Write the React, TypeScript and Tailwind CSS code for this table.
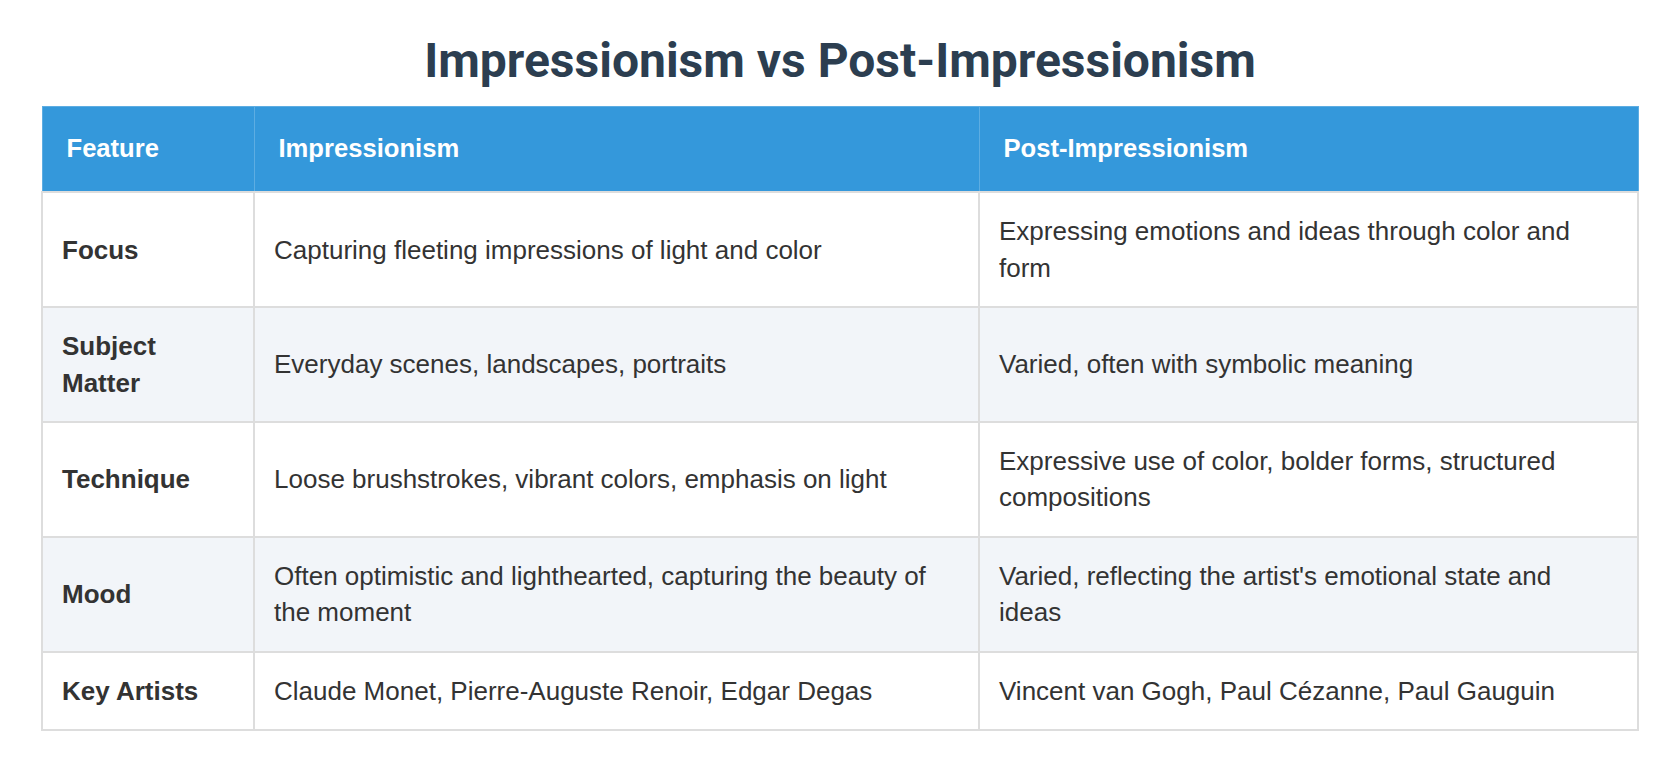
const rows = [
  {
    feature: "Focus",
    imp: "Capturing fleeting impressions of light and color",
    post: "Expressing emotions and ideas through color and form",
  },
  {
    feature: "Subject Matter",
    imp: "Everyday scenes, landscapes, portraits",
    post: "Varied, often with symbolic meaning",
  },
  {
    feature: "Technique",
    imp: "Loose brushstrokes, vibrant colors, emphasis on light",
    post: "Expressive use of color, bolder forms, structured compositions",
  },
  {
    feature: "Mood",
    imp: "Often optimistic and lighthearted, capturing the beauty of the moment",
    post: "Varied, reflecting the artist's emotional state and ideas",
  },
  {
    feature: "Key Artists",
    imp: "Claude Monet, Pierre-Auguste Renoir, Edgar Degas",
    post: "Vincent van Gogh, Paul Cézanne, Paul Gauguin",
  },
];

export default function App() {
  return (
    <div className="min-h-screen bg-white px-[41px] pt-[32px] pb-[40px]">
      <h1 className="mb-[16px] text-center font-['Roboto',sans-serif] text-[48px] font-bold leading-[1.2] text-[#2c3e50]">
        Impressionism vs Post-Impressionism
      </h1>

      <table className="w-full table-fixed border-collapse font-['Liberation_Sans',Arial,sans-serif] text-[26px] leading-[1.4]">
        <colgroup>
          <col className="w-[212px]" />
          <col className="w-[725px]" />
          <col />
        </colgroup>
        <thead>
          <tr className="bg-[#3498db] text-white">
            <th className="border border-[#5dade2] px-[24px] py-[24.5px] text-left text-[25.6px] font-bold">Feature</th>
            <th className="border border-[#5dade2] px-[24px] py-[24.5px] text-left text-[25.6px] font-bold">Impressionism</th>
            <th className="border border-[#5dade2] px-[24px] py-[24.5px] text-left text-[25.6px] font-bold">Post-Impressionism</th>
          </tr>
        </thead>
        <tbody>
          {rows.map((r, i) => (
            <tr key={r.feature} className={i % 2 === 1 ? "bg-[#f2f5f9]" : "bg-white"}>
              <td className="border-2 border-[#dddddd] px-[19px] py-[20px] font-bold text-[#333333]">
                {r.feature}
              </td>
              <td className="border-2 border-[#dddddd] px-[19px] py-[20px] text-[#333333]">{r.imp}</td>
              <td className="border-2 border-[#dddddd] px-[19px] py-[20px] text-[#333333]">{r.post}</td>
            </tr>
          ))}
        </tbody>
      </table>
    </div>
  );
}
